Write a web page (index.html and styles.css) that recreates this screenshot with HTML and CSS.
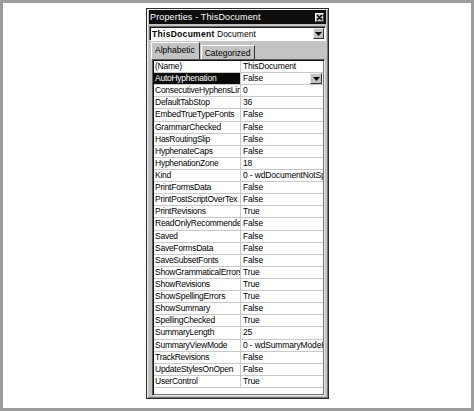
FILE: index.html
```html
<!DOCTYPE html>
<html>
<head>
<meta charset="utf-8">
<link rel="stylesheet" href="styles.css">
</head>
<body>
<div class="frame">
  <div class="window">
    <div class="titlebar">
      <span class="title">Properties - ThisDocument</span>
      <span class="close"><svg width="7" height="7" viewBox="0 0 7 7"><path d="M1 1 L6 6 M6 1 L1 6" stroke="#000" stroke-width="1.6"/></svg></span>
    </div>
    <div class="combo">
      <span class="combo-text"><b>ThisDocument</b> Document</span>
      <span class="dropbtn"><svg width="7" height="4" viewBox="0 0 7 4"><polygon points="0,0 7,0 3.5,4" fill="#000"/></svg></span>
    </div>
    <div class="tabs">
      <div class="tab active">Alphabetic</div>
      <div class="tab">Categorized</div>
    </div>
    <div class="grid">
      <div class="row"><div class="name">(Name)</div><div class="value">ThisDocument</div></div>
      <div class="row selected"><div class="name">AutoHyphenation</div><div class="value"><span>False</span><span class="dropbtn small"><svg width="7" height="4" viewBox="0 0 7 4"><polygon points="0,0 7,0 3.5,4" fill="#000"/></svg></span></div></div>
      <div class="row"><div class="name">ConsecutiveHyphensLin</div><div class="value">0</div></div>
      <div class="row"><div class="name">DefaultTabStop</div><div class="value">36</div></div>
      <div class="row"><div class="name">EmbedTrueTypeFonts</div><div class="value">False</div></div>
      <div class="row"><div class="name">GrammarChecked</div><div class="value">False</div></div>
      <div class="row"><div class="name">HasRoutingSlip</div><div class="value">False</div></div>
      <div class="row"><div class="name">HyphenateCaps</div><div class="value">False</div></div>
      <div class="row"><div class="name">HyphenationZone</div><div class="value">18</div></div>
      <div class="row"><div class="name">Kind</div><div class="value">0 - wdDocumentNotSp</div></div>
      <div class="row"><div class="name">PrintFormsData</div><div class="value">False</div></div>
      <div class="row"><div class="name">PrintPostScriptOverTex</div><div class="value">False</div></div>
      <div class="row"><div class="name">PrintRevisions</div><div class="value">True</div></div>
      <div class="row"><div class="name">ReadOnlyRecommende</div><div class="value">False</div></div>
      <div class="row"><div class="name">Saved</div><div class="value">False</div></div>
      <div class="row"><div class="name">SaveFormsData</div><div class="value">False</div></div>
      <div class="row"><div class="name">SaveSubsetFonts</div><div class="value">False</div></div>
      <div class="row"><div class="name">ShowGrammaticalErrors</div><div class="value">True</div></div>
      <div class="row"><div class="name">ShowRevisions</div><div class="value">True</div></div>
      <div class="row"><div class="name">ShowSpellingErrors</div><div class="value">True</div></div>
      <div class="row"><div class="name">ShowSummary</div><div class="value">False</div></div>
      <div class="row"><div class="name">SpellingChecked</div><div class="value">True</div></div>
      <div class="row"><div class="name">SummaryLength</div><div class="value">25</div></div>
      <div class="row"><div class="name">SummaryViewMode</div><div class="value">0 - wdSummaryModeH</div></div>
      <div class="row"><div class="name">TrackRevisions</div><div class="value">False</div></div>
      <div class="row"><div class="name">UpdateStylesOnOpen</div><div class="value">False</div></div>
      <div class="row"><div class="name">UserControl</div><div class="value">True</div></div>
    </div>
  </div>
</div>
</body>
</html>
```

FILE: styles.css
```css
html, body {
  margin: 0;
  padding: 0;
}
body {
  font-family: "Liberation Sans", Arial, sans-serif;
  font-size: 8.5px;
  color: #000;
}
.frame {
  width: 474px;
  height: 411px;
  box-sizing: border-box;
  border: 3px solid #9c9c9c;
  background: #fff;
  padding: 5px 0 0 143px;
}
.window {
  width: 183px;
  height: 391px;
  box-sizing: border-box;
  background: #c3c3c3;
  border: 1px solid #2a2a2a;
  box-shadow: inset 1px 1px 0 #f4f4f4, inset -1px -1px 0 #7a7a7a;
  padding: 1px 2px 2px 2px;
  display: flex;
  flex-direction: column;
}
.titlebar {
  height: 14px;
  flex: none;
  background: #0e0e0e;
  color: #fff;
  display: flex;
  align-items: center;
  justify-content: space-between;
  padding: 0 2px 0 1px;
  font-size: 9px;
  letter-spacing: 0.15px;
}
.close {
  width: 9px;
  height: 9px;
  box-sizing: border-box;
  background: #c3c3c3;
  border: 1px solid;
  border-color: #fff #404040 #404040 #fff;
  display: flex;
  align-items: center;
  justify-content: center;
}
.close svg { display: block; }
.combo {
  margin-top: 2px;
  height: 15px;
  flex: none;
  box-sizing: border-box;
  background: #fff;
  border: 1px solid;
  border-color: #6a6a6a #fff #fff #6a6a6a;
  box-shadow: inset 1px 1px 0 #1a1a1a;
  display: flex;
  align-items: center;
  justify-content: space-between;
  padding: 0 1px 0 2px;
}
.combo-text b {
  letter-spacing: 0.3px;
}
.dropbtn {
  width: 11px;
  height: 11px;
  box-sizing: border-box;
  background: #c3c3c3;
  border: 1px solid;
  border-color: #eee #303030 #303030 #eee;
  display: flex;
  align-items: center;
  justify-content: center;
}
.dropbtn svg { display: block; }
.tabs {
  margin-top: 1px;
  height: 17px;
  flex: none;
  display: flex;
  align-items: flex-end;
  padding-left: 2px;
}
.tab {
  height: 14px;
  box-sizing: border-box;
  padding: 0 3px 0 3px;
  border: 1px solid;
  border-bottom: none;
  border-color: #fff #303030 transparent #fff;
  display: flex;
  align-items: center;
  margin-left: 1px;
}
.tab.active {
  height: 17px;
  margin-left: 0;
  padding: 0 4px 2px 3px;
}
.grid {
  flex: 1;
  margin: 0 1px 0 3px;
  background: #fff;
  border: 1px solid;
  border-color: #5a5a5a #e8e8e8 #e8e8e8 #5a5a5a;
  box-shadow: inset 1px 1px 0 #111, inset -1px -1px 0 #777;
  padding: 1px;
  display: flex;
  flex-direction: column;
  overflow: hidden;
}
.row {
  height: 12.12px;
  flex: none;
  box-sizing: border-box;
  display: grid;
  grid-template-columns: 87px 1fr;
  border-bottom: 1px solid #c9c9c9;
  line-height: 11px;
}
.name {
  border-right: 1px solid #c9c9c9;
  padding-left: 1px;
  white-space: nowrap;
  overflow: hidden;
  letter-spacing: -0.25px;
}
.value {
  padding-left: 2px;
  white-space: nowrap;
  overflow: hidden;
  letter-spacing: -0.15px;
}
.row.selected .name {
  background: #0a0a0a;
  color: #fff;
}
.row.selected .value {
  display: flex;
  align-items: center;
  justify-content: space-between;
  padding-right: 1px;
}
.dropbtn.small {
  width: 12px;
  height: 11px;
}
```
